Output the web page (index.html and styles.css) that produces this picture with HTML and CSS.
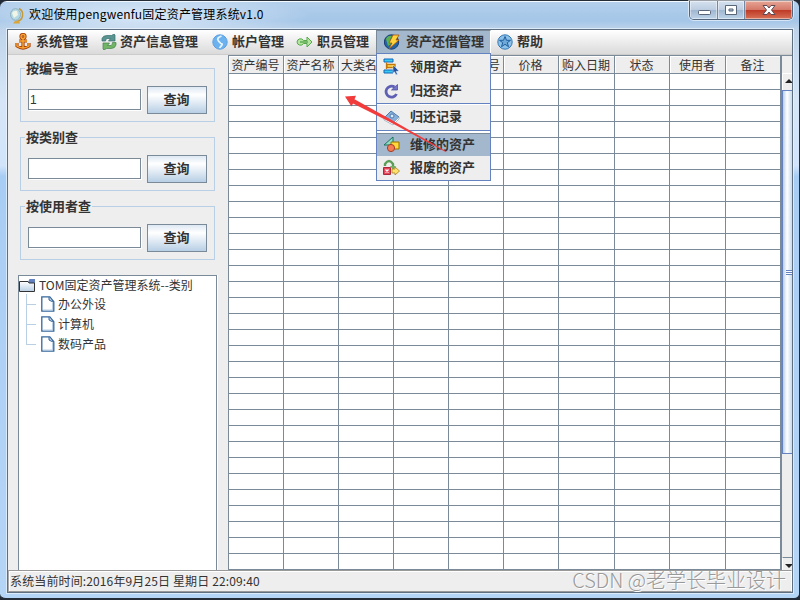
FILE: index.html
```html
<!DOCTYPE html>
<html lang="zh-CN">
<head>
<meta charset="utf-8">
<title>欢迎使用pengwenfu固定资产管理系统v1.0</title>
<link rel="stylesheet" href="styles.css">
</head>
<body>
<div class="window">
  <header class="titlebar">
    <svg class="app-icon" width="16" height="18" viewBox="0 0 16 18"><path d="M10 1.500Q14.500 4 13.500 9T7 14.500" fill="none" stroke="#c79a35" stroke-width="1.500"/><ellipse cx="6.500" cy="7.500" rx="5" ry="5.800" fill="#b5d8e5" stroke="#8fb0bd"/><path d="M3 6q2-3 5-2l1 4-4 3z" fill="#f0f5e6"/><path d="M6 14h4l1 2.500H4z" fill="#d9a63a"/></svg>
    <h1>欢迎使用pengwenfu固定资产管理系统v1.0</h1>
    <div class="controls">
      <span class="ctl min"><svg width="28" height="18"><rect x="8.500" y="9.500" width="12" height="4" rx="1" fill="#fff" stroke="#596579"/></svg></span>
      <span class="ctl max"><svg width="26" height="18"><path d="M7.500 4.500h11v9h-11z M11 8h4v2h-4z" fill="#fff" fill-rule="evenodd" stroke="#596579"/></svg></span>
      <span class="ctl close"><svg width="46" height="18"><path d="M18 4.500h4l2 2.500L26 4.500h4L26.500 9l3.500 4.500h-4L24 11l-2 2.500h-4L21.500 9z" fill="#fff" stroke="#5d4954"/></svg></span>
    </div>
  </header>
  <main class="client">
    <nav class="menubar">
      <div class="menu m1"><svg width="16" height="18" viewBox="0 0 16 18"><g fill="none" stroke="#a8420c" stroke-width="3.200"><circle cx="8" cy="3.500" r="2"/><path d="M8 5v10M4 8h8M2 10v3q6 4 12 0v-3"/></g><g fill="none" stroke="#f9a634" stroke-width="1.400"><circle cx="8" cy="3.500" r="2"/><path d="M8 5v10M4 8h8M2 10v3q6 4 12 0v-3"/></g></svg><span>系统管理</span></div>
      <div class="menu m2"><svg width="16" height="16" viewBox="0 0 16 16"><path d="M1 7V4.500Q2 1.500 6 1.500h4.500L13 0l1 1v6H7.500L9.500 4.500H6Q4.500 5 4.500 7z" fill="#5b9390" stroke="#34706d" stroke-width=".7"/><path d="M15 8.500V11q-1 3.500-5 3.500H5.500L3 16l-1-1V9h6.500L6.500 11.500H10q1.500-.5 1.500-3z" fill="#72b565" stroke="#43834c" stroke-width=".7"/></svg><span>资产信息管理</span></div>
      <div class="menu m3"><svg width="16" height="16" viewBox="0 0 16 16"><circle cx="8" cy="8" r="7.200" fill="#6cb2ee" stroke="#5c9fe0"/><path d="M9.500 2Q4 4 6.500 7t3.500 3-2.500 4" fill="none" stroke="#e5f5ff" stroke-width="1.800"/></svg><span>帐户管理</span></div>
      <div class="menu m4"><svg width="17" height="12" viewBox="0 0 17 12"><path d="M1 6a3.500 3.500 0 0 1 6.500-1.500H11V1l5 5-5 5V7.500H7.500A3.500 3.500 0 0 1 1 6z" fill="#b4e5a0" stroke="#56a94c"/><path d="M4 6h8" stroke="#489d43" stroke-width="1.200"/></svg><span>职员管理</span></div>
      <div class="menu m5 open"><svg width="16" height="16" viewBox="0 0 16 16"><circle cx="7.500" cy="8" r="7.200" fill="#2363a8" stroke="#183b72"/><path d="M2 5q2-4 6-3L6 6l1 4-3 2z" fill="#5ab04b"/><path d="M9 1h6l-3 5h3L5 15l3-6H5z" fill="#ffd33a" stroke="#a6540f" stroke-width=".8"/></svg><span>资产还借管理</span></div>
      <div class="menu m6"><svg width="16" height="16" viewBox="0 0 16 16"><circle cx="8" cy="8" r="7.200" fill="#8bc0e8" stroke="#3478b5"/><path d="M8 2.500l1.500 3.800h4l-3.200 2.400 1.200 4L8 10.300l-3.500 2.400 1.200-4L2.500 6.300h4z" fill="#6fa9d8" stroke="#205e9d" stroke-width="1"/></svg><span>帮助</span></div>
    </nav>
    <div class="body">
      <aside class="side">
        <section class="group"><h2>按编号查</h2><input type="text" value="1"><button>查询</button></section>
        <section class="group"><h2>按类别查</h2><input type="text"><button>查询</button></section>
        <section class="group"><h2>按使用者查</h2><input type="text"><button>查询</button></section>
        <div class="tree">
          <div class="root"><svg width="17" height="13" viewBox="0 0 17 13"><defs><linearGradient id="fold" x2="0" y2="1"><stop stop-color="#fff"/><stop offset="1" stop-color="#b8cfe5"/></linearGradient></defs><path d="M9 3l1.500-3H16v4H9z" fill="#6382bf"/><path d="M.5 12.500v-10H9l1 1.500h5.500v8.500z" fill="url(#fold)" stroke="#333"/></svg><span>TOM固定资产管理系统--类别</span></div>
          <ul>
            <li><svg width="14" height="16" viewBox="0 0 14 16"><path d="M.8.800h8l4 5v9.400H.8z" fill="#fff" stroke="#36679b" stroke-width="1.300"/><path d="M8 1v3l4 2" fill="#b8cfe5" stroke="#36679b"/><path d="M2 14h9.500V7" fill="none" stroke="#b8cfe5"/></svg><span>办公外设</span></li>
            <li><svg width="14" height="16" viewBox="0 0 14 16"><path d="M.8.800h8l4 5v9.400H.8z" fill="#fff" stroke="#36679b" stroke-width="1.300"/><path d="M8 1v3l4 2" fill="#b8cfe5" stroke="#36679b"/><path d="M2 14h9.500V7" fill="none" stroke="#b8cfe5"/></svg><span>计算机</span></li>
            <li><svg width="14" height="16" viewBox="0 0 14 16"><path d="M.8.800h8l4 5v9.400H.8z" fill="#fff" stroke="#36679b" stroke-width="1.300"/><path d="M8 1v3l4 2" fill="#b8cfe5" stroke="#36679b"/><path d="M2 14h9.500V7" fill="none" stroke="#b8cfe5"/></svg><span>数码产品</span></li>
          </ul>
        </div>
      </aside>
      <div class="table">
        <div class="col"><b>资产编号</b></div>
        <div class="col"><b>资产名称</b></div>
        <div class="col"><b class="start">大类名</b></div>
        <div class="col"><b></b></div>
        <div class="col"><b class="end-text">号</b></div>
        <div class="col"><b>价格</b></div>
        <div class="col"><b>购入日期</b></div>
        <div class="col"><b>状态</b></div>
        <div class="col"><b>使用者</b></div>
        <div class="col"><b>备注</b></div>
      </div>
      <div class="scroll">
        <div class="corner"></div>
        <div class="arrow"><svg width="9" height="16"><path d="M2 9l4-4 4 4z" fill="#222"/></svg></div>
        <div class="thumb"><i></i></div>
        <div class="track"></div>
        <div class="arrow end"><svg width="9" height="12"><path d="M2 6h8l-4 4z" fill="#222"/></svg></div>
      </div>
    </div>
    <footer class="status">系统当前时间:2016年9月25日 星期日 22:09:40</footer>
  </main>

  <div class="popup">
    <div class="item"><svg width="17" height="17" viewBox="0 0 17 17"><path d="M1 1h9v3H1zM1 12h9v3H1z" fill="#37cdf2" stroke="#1265b9"/><path d="M3.500 4.500V11M4 6.500h8v3H4z" fill="#ffe354" stroke="#c57608" stroke-width="1.300"/><path d="M10 7l6 6-3 .3 1.500 3-1.500.5-1.500-3-1.500 1z" fill="#244f9d" stroke="#d9e8ff" stroke-width=".5"/></svg><span>领用资产</span></div>
    <div class="item"><svg width="17" height="17" viewBox="0 0 17 17"><path d="M13.500 11A5.500 5.500 0 1 1 11.500 4" fill="none" stroke="#5f5fb5" stroke-width="2.800"/><path d="M8.500 7h6V1.500z" fill="#7474c8" stroke="#45459a" stroke-width=".7"/></svg><span>归还资产</span></div>
    <div class="sep"></div>
    <div class="item rec"><svg width="17" height="17" viewBox="0 0 17 17"><path d="M1 9l7-7 8 6-6 6z" fill="#86b0db" stroke="#527ba9"/><path d="M1 9v2l9 5 6-6V8l-6 6z" fill="#fff" stroke="#8aa0b8" stroke-width=".7"/><circle cx="9" cy="7" r="2" fill="#d7eaff" stroke="#527ba9"/></svg><span>归还记录</span></div>
    <div class="sep two"></div>
    <div class="item selected"><svg width="17" height="17" viewBox="0 0 17 17"><path d="M1 9L10 1v8z" fill="#8fdcc8" stroke="#18735f"/><path d="M8 6h8v7H8z" fill="#ffd839" stroke="#987200"/><circle cx="8" cy="12" r="3.600" fill="#f47c54" stroke="#a63d26"/></svg><span>维修的资产</span></div>
    <div class="item last"><svg width="17" height="17" viewBox="0 0 17 17"><path d="M2 7V5q4-6 8 0v3" fill="none" stroke="#5c9d58" stroke-width="2.400"/><path d="M7 7h6L10 11z" fill="#70ae63"/><path d="M.5 8.500h7v7h-7z" fill="#e6455a" stroke="#ad2939"/><path d="M2.500 10.500l3 3m0-3l-3 3" stroke="#fff" stroke-width="1.300"/><path d="M9 10h3V8l4.500 4-4.500 4v-2H9z" fill="#ffe16b" stroke="#a9821c" stroke-width=".8"/></svg><span>报废的资产</span></div>
  </div>
  <svg class="pointer" width="104" height="60" viewBox="0 0 104 60"><path d="M1 1.500l11-.8-1.500 3.500L46 24l56.500 32.500-.4.800L45 26.500 9 8.500 7.500 11.500z" fill="#f23b3b"/></svg>
  <div class="watermark">CSDN @老学长毕业设计</div>
</div>
</body>
</html>
```

FILE: styles.css
```css
* { box-sizing: border-box; }
body { margin: 0; background: #222b35; overflow: hidden; }
svg { display: block; flex: none; }

.window {
  position: relative;
  width: 800px;
  height: 600px;
  padding: 1px 7px 7px;
  border: solid #242c38;
  border-width: 1px 1px 2px 0;
  border-radius: 7px 7px 6px 6px;
  background:
    radial-gradient(ellipse 170px 24px at 140px 15px, rgba(228, 239, 250, .85), transparent),
    linear-gradient(180deg, #f4faff 0 1px, transparent 1px),
    linear-gradient(180deg, #b3cfeb 0, #a5c6e8 20px, #bfd4ea 29px, #d6e6f8 100px, #d1e4fa 165px, #a8cdf4 175px, #b5d5f6 100%);
  font-family: "Noto Sans CJK SC", sans-serif;
  font-size: 12px;
  color: #333;
}

.titlebar { display: flex; align-items: flex-start; height: 27px; padding-left: 2px; }
.app-icon { margin-top: 5px; }
.titlebar h1 {
  flex: 1;
  margin: 0 0 0 4px;
  font: 12px/24px "Noto Sans CJK SC", sans-serif;
  letter-spacing: .19px;
  color: #000;
  white-space: nowrap;
}
.controls {
  display: flex;
  height: 19px;
  margin: -1px -1px 0 0;
  border: 1px solid #53647d;
  border-top: 0;
  border-radius: 0 0 5px 5px;
  overflow: hidden;
  box-shadow: 0 0 0 1px rgba(255, 255, 255, .55);
}
.ctl { background: linear-gradient(#d5e1ef 0, #bdcde1 48%, #9fb6d0 50%, #bdd3e8); border-right: 1px solid #7488a2; box-shadow: inset 0 0 0 1px rgba(255,255,255,.45); }
.min { width: 28px; }
.max { width: 27px; }
.close { width: 47px; border: 0; background: linear-gradient(#e5a595 0, #d57969 48%, #bd3824 50%, #d87358); }

.client {
  display: flex;
  flex-direction: column;
  width: 786px;
  height: 564px;
  border: 1px solid #5f6f82;
  background: #eee;
  box-shadow: 0 0 0 1px rgba(240, 248, 255, .65);
}
.menubar {
  display: flex;
  height: 25px;
  padding-left: 7px;
  border-bottom: 1px solid #ccc;
  background: linear-gradient(#fff, #dadada);
  font-size: 13px;
  font-weight: bold;
}
.menu { display: flex; align-items: center; height: 23px; white-space: nowrap; }
.menu span { height: 23px; line-height: 21px; }
.m1 { width: 86px; gap: 5px; }
.m2 { width: 111px; gap: 3px; }
.m3 { width: 84px; gap: 4px; }
.m4 { width: 80px; gap: 4px; }
.m5 { width: 115px; gap: 6px; padding-left: 7px; }
.m6 { gap: 4px; padding-left: 6px; }
.open { border: 1px solid #7a8a99; border-right-color: #fff; border-bottom: 0; background: #a3b8cc; }
.open span { line-height: 20px; }

.body { display: flex; height: 515px; }
.side { display: flex; flex-direction: column; width: 220px; padding: 13px 0 0 12px; }
.group {
  position: relative;
  display: flex;
  align-items: flex-start;
  width: 195px;
  height: 54px;
  margin-bottom: 15px;
  padding: 17px 0 0 7px;
  border: 1px solid #b8cfe5;
}
.group h2 {
  position: absolute;
  left: 4px;
  top: -10px;
  margin: 0;
  padding: 0 1px;
  background: #eee;
  font-size: 13px;
  line-height: 18px;
}
.group input {
  width: 113px;
  height: 21px;
  margin-top: 3px;
  padding: 0 1px;
  border: 1px solid #7a8a99;
  border-radius: 0;
  outline: 0;
  box-shadow: 1px 1px #fff;
  background: #fff;
  font: 12px "Liberation Sans", sans-serif;
  color: #333;
}
.group button {
  width: 60px;
  height: 28px;
  margin-left: 6px;
  padding: 0 1px 2px 0;
  border: 1px solid #7a8a99;
  border-radius: 0;
  background: linear-gradient(#dde8f3, #fff 30%, #b8cfe5);
  font: bold 13px/24px "Noto Sans CJK SC", sans-serif;
  color: #333;
}
.tree {
  width: 199px;
  height: 295px;
  margin-left: -2px;
  border: solid #7a8a99;
  border-width: 1px 1px 0;
  background: #fff;
  box-shadow: 1px 0 #fff;
}
.root { display: flex; align-items: center; gap: 3px; height: 18px; white-space: nowrap; }
.root span { line-height: 18px; }
.tree ul { margin: 0; padding: 0 0 0 7px; list-style: none; }
.tree li { display: flex; align-items: center; gap: 4px; height: 20px; line-height: 20px; }
.tree li span { margin-left: -1px; }
.tree li::before {
  content: "";
  width: 10px;
  height: 20px;
  border-left: 1px solid #b8cfe5;
  background: linear-gradient(#b8cfe5, #b8cfe5) 0 10px / 9px 1px no-repeat;
}
.tree li:last-child::before { height: 11px; align-self: flex-start; }

.table {
  display: grid;
  grid-template-columns: 55px 55px 55px 55px 55px 55px 56px 55px 56px 55px;
  width: 554px;
  height: 515px;
  border-left: 1px solid #7a8a99;
  background: #7a8a99;
}
.col {
  padding-top: 1px;
  border-right: 1px solid #7a8a99;
  background: repeating-linear-gradient(#fff 0 15px, #7a8a99 15px 16px) 0 19px / 100% 496px no-repeat;
}
.col b {
  display: block;
  height: 17px;
  padding-right: 2px;
  border: solid #fff;
  border-width: 1px 0 0 1px;
  background: #eee;
  font-weight: normal;
  line-height: 16px;
  text-align: center;
  white-space: nowrap;
}
.col .start { padding-left: 1px; text-align: left; }
.col .end-text { padding-right: 3px; text-align: right; }
.scroll { display: flex; flex-direction: column; width: 10px; background: #eee; }
.corner { height: 19px; border-top: 1px solid #7a8a99; border-bottom: 1px solid #fff; }
.arrow { height: 16px; border-left: 1px solid #fff; overflow: hidden; }
.thumb {
  height: 364px;
  padding: 179px 0 0 3px;
  border: 1px solid #6382bf;
  border-right: 0;
  background: linear-gradient(90deg, #b8cfe5, #fff 45%, #c8dbee);
}
.thumb i { display: block; height: 5px; background: repeating-linear-gradient(#6382bf 0 1px, #fff 1px 2px); }
.track { flex: 1; }
.end { height: 13px; border-top: 1px solid #7a8a99; }
.status {
  height: 22px;
  padding-left: 1px;
  border: 1px solid #999;
  border-color: #999 #fff #999 #aaa;
  box-shadow: inset 1px 1px #fff;
  line-height: 19px;
  letter-spacing: .13px;
  white-space: pre;
}

.popup {
  position: absolute;
  left: 376px;
  top: 52px;
  width: 115px;
  height: 128px;
  border: 1px solid #6382bf;
  background: #eee;
  font-size: 13px;
  font-weight: bold;
}
.item { display: flex; align-items: center; gap: 10px; height: 23px; padding-left: 6px; line-height: 22px; white-space: nowrap; }
.item:first-child { height: 26px; }
.item span { margin-top: -3px; }
.item svg { margin-top: -1px; }
.sep { height: 2px; border-top: 1px solid #6382bf; background: #fff; }
.rec { height: 25px; }
.two { height: 3px; }
.selected { height: 23px; border-top: 1px solid #7a8a99; background: #a3b8cc; }
.last { height: 24px; }
.pointer { position: absolute; left: 344px; top: 94px; }
.watermark {
  position: absolute;
  right: 13px;
  top: 565px;
  font-size: 20px;
  line-height: 28px;
  font-weight: 300;
  color: #999;
  text-shadow: 1px 1px #fff;
  white-space: nowrap;
}
```
